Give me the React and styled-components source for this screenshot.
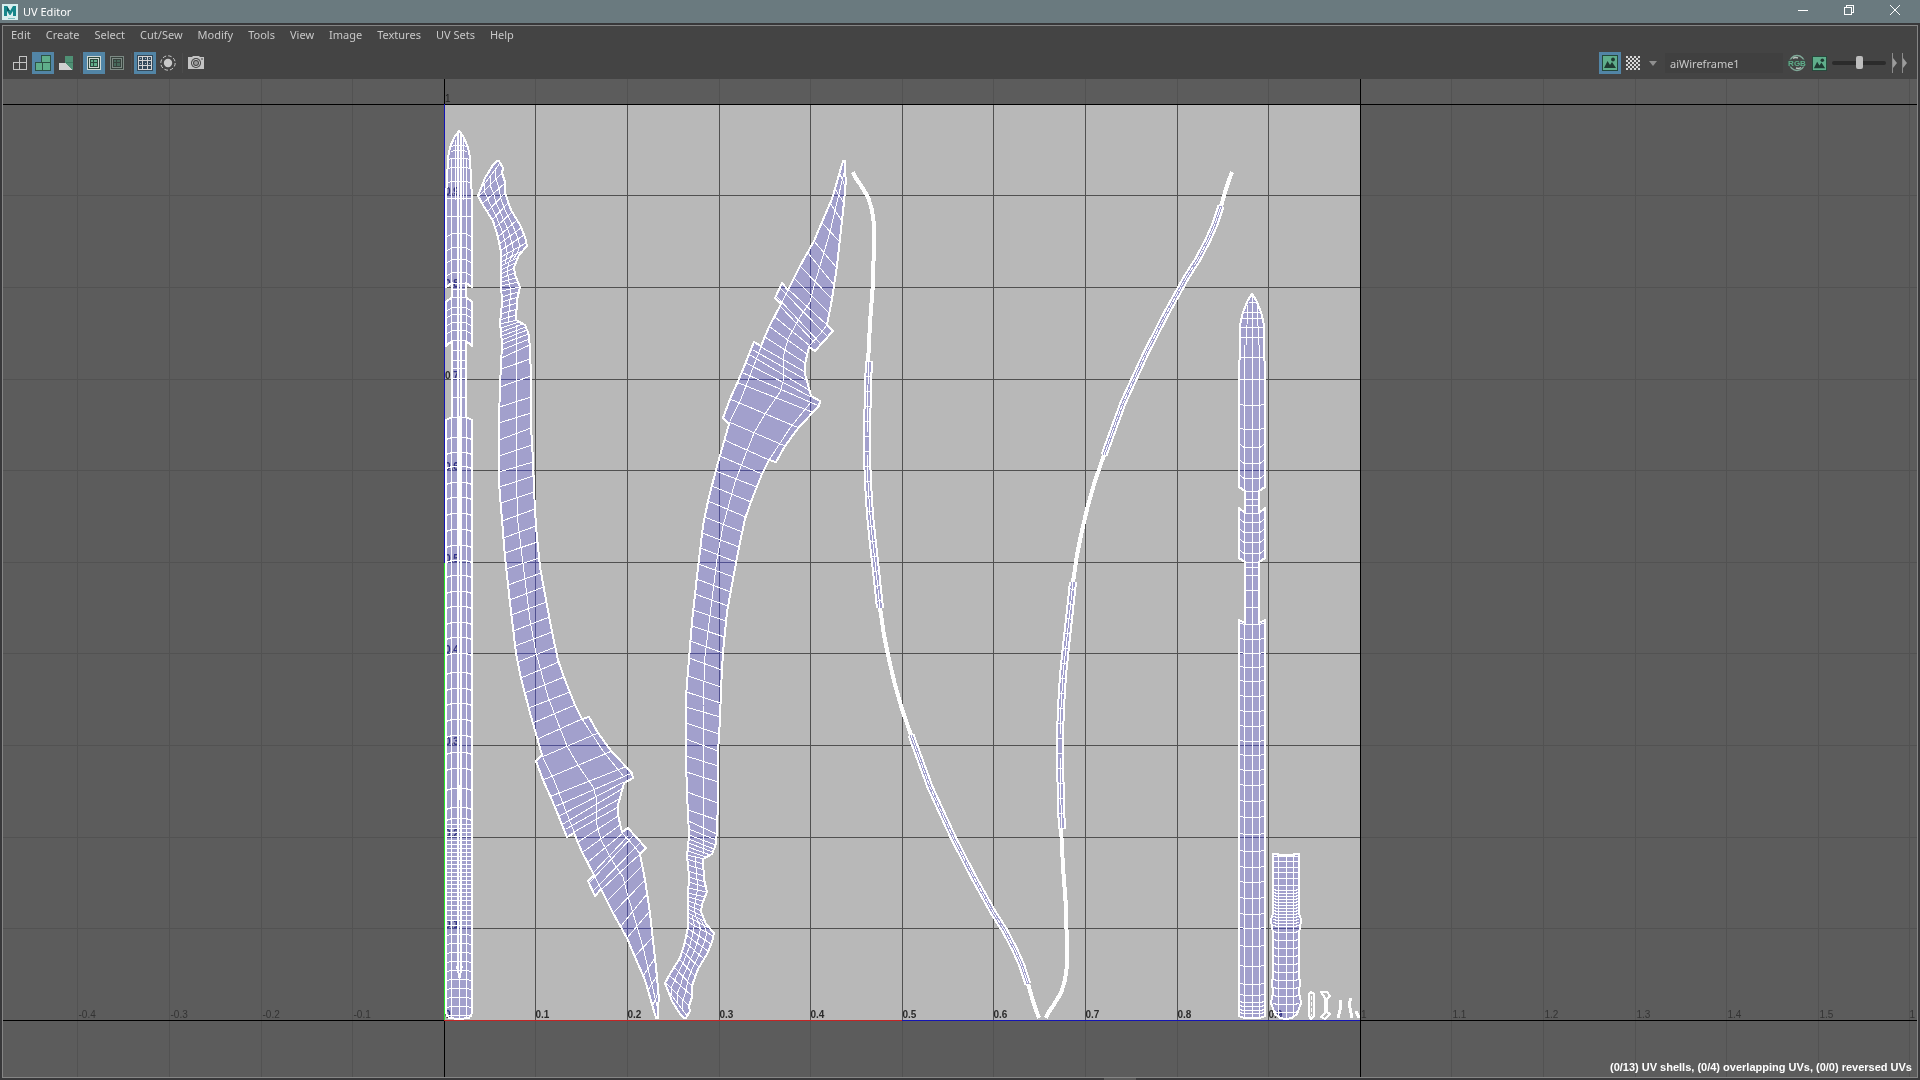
import React from "react";
import styled, { createGlobalStyle } from "styled-components";

const GlobalStyle = createGlobalStyle`
  * { box-sizing: border-box; }
  html, body, #root { height: 100%; }
  body { margin: 0; background: #333; overflow: hidden; }
  button, input { font: inherit; color: inherit; }
`;

const ui = `"Noto Sans", "Open Sans", sans-serif`;

const Window = styled.div`
  display: flex;
  flex-direction: column;
  height: 100vh;
  background: #38383a;
  font-family: ${ui};
`;

const TitleBar = styled.header`
  display: flex;
  align-items: center;
  height: 23px;
  flex: none;
  padding: 0 2px;
  background: #6a7a7f;
  color: #fff;
`;

const Title = styled.h1`
  flex: 1;
  margin: 0 0 0 5px;
  font-size: 11px;
  font-weight: 400;
  line-height: 16px;
`;

const WindowButton = styled.button`
  display: flex;
  align-items: center;
  justify-content: center;
  width: 46px;
  height: 20px;
  margin-bottom: 3px;
  padding: 0;
  border: 0;
  background: none;
`;

const Panel = styled.main`
  display: flex;
  flex-direction: column;
  flex: 1;
  min-height: 0;
  margin: 2px 2px 0;
  border: 1px solid #858585;
  background: #444;
`;

const MenuBar = styled.nav`
  display: flex;
  align-items: center;
  gap: 15px;
  height: 18px;
  padding-left: 8px;
  color: #c8c8c8;
`;

const MenuItem = styled.button`
  padding: 0;
  border: 0;
  background: none;
  font-size: 11px;
  line-height: 14px;
`;

const ToolBar = styled.div`
  display: flex;
  align-items: center;
  height: 35px;
  padding: 3px 8px 0 6px;
`;

const Group = styled.div`
  display: flex;
  align-items: center;
  gap: ${(p) => p.$gap || 0}px;
`;

const Divider = styled.span`
  width: 1px;
  height: 20px;
  margin: 0 2px;
  background: #4c4c4c;
`;

const Spacer = styled.span`
  flex: 1;
`;

const Tool = styled.button`
  display: flex;
  align-items: center;
  justify-content: center;
  width: ${(p) => p.$w || 22}px;
  height: 22px;
  padding: 0;
  border: 0;
  background: ${(p) => (p.$on ? "#5285a6" : "none")};
`;

const TextureField = styled.input`
  width: 118px;
  height: 20px;
  margin: 0 3px 0 4px;
  padding: 0 5px;
  border: 0;
  background: #404040;
  color: #c8c8c8;
  font-size: 11px;
`;

const DimSlider = styled.input`
  appearance: none;
  width: 54px;
  height: 14px;
  margin: 0 3px 0 2px;
  background: none;
  &::-webkit-slider-runnable-track {
    height: 4px;
    border-radius: 2px;
    background: #2b2b2b;
  }
  &::-webkit-slider-thumb {
    appearance: none;
    width: 7px;
    height: 13px;
    margin-top: -5px;
    border-radius: 2px;
    background: #bdbdbd;
  }
`;

const Viewport = styled.section`
  display: flex;
  flex: 1;
  min-height: 0;
  flex-direction: column;
  justify-content: flex-end;
  position: relative;
  background: #5c5c5c;
`;

const Canvas = styled.svg`
  position: absolute;
  inset: 0;
  width: 100%;
  height: 100%;
  font-family: "Liberation Sans", Arial, sans-serif;
  font-size: 10px;
`;

const Status = styled.p`
  position: relative;
  margin: 0;
  padding: 0 5px 3px;
  text-align: right;
  color: #fff;
  font: bold 11px/14px "Liberation Sans", Arial, sans-serif;
`;

const BottomEdge = styled.footer`
  display: flex;
  justify-content: center;
  height: 2px;
  flex: none;
`;

const Grip = styled.span`
  width: 32px;
  margin-left: 320px;
  background: #5a5a5a;
`;

/* ---------- geometry of the UV tile ---------- */
const X0 = 444.3;
const Y0 = 1020.3;
const STEP = 91.6;
const ux = (u) => Math.floor(X0 + u * STEP) + 0.5;
const vy = (v) => Math.floor(Y0 - v * STEP) + 0.5;
const range = (a, b, s = 1) => {
  const out = [];
  for (let i = a; i <= b; i += s) out.push(i);
  return out;
};
const path = (pts) => "M" + pts.map((p) => p.join(" ")).join("L");
const at = (edge, y) => {
  for (let i = 1; i < edge.length; i++) {
    const [xa, ya] = edge[i - 1];
    const [xb, yb] = edge[i];
    if (y >= Math.min(ya, yb) && y <= Math.max(ya, yb) && ya !== yb)
      return xa + ((xb - xa) * (y - ya)) / (yb - ya);
  }
  return edge[edge.length - 1][0];
};

/* ---------- bow limb ---------- */
const bowLeft = [
  [497, 161], [493, 165], [485, 178], [478, 196], [483, 205], [493, 221], [498, 237],
  [501, 253], [501, 283], [502, 303], [500, 323], [502, 343], [501, 367], [500, 383],
  [499, 423], [499, 483], [502, 520], [505, 557], [510, 603], [516, 653], [521, 678],
  [530, 713], [542, 755], [536, 761], [543, 780], [552, 800], [567, 837], [574, 833],
  [582, 852], [594, 875], [588, 881], [595, 896], [601, 889], [613, 913], [627, 938],
  [635, 957], [645, 980], [656, 1018],
];
const bowRight = [
  [499, 161], [503, 168], [502, 173], [505, 182], [505, 193], [511, 210], [520, 225],
  [525, 237], [527, 246], [519, 255], [514, 267], [515, 275], [520, 287], [517, 300],
  [516, 320], [525, 325], [529, 335], [530, 350], [531, 377], [531, 427], [532, 443],
  [533, 460], [534, 490], [536, 527], [540, 567], [546, 600], [552, 632], [558, 660],
  [565, 680], [575, 705], [582, 719], [589, 717], [598, 733], [612, 752], [632, 773],
  [633, 778], [624, 783], [618, 805], [618, 815], [622, 832], [628, 828], [646, 848],
  [640, 854], [645, 880], [650, 913], [653, 940], [657, 977], [659, 1000], [658, 1004], [658, 1018],
];
const gripRungs = [
  [[480, 190], [500, 163]], [[478, 197], [502, 173]], [[482, 204], [505, 183]],
  [[487, 212], [505, 193]], [[492, 220], [508, 203]], [[495, 228], [512, 212]],
  [[498, 237], [517, 220]], [[499, 244], [521, 228]], [[500, 251], [524, 235]],
  [[501, 257], [526, 243]], [[501, 262], [522, 251]], [[501, 266], [517, 258]],
  [[501, 270], [515, 263]], [[501, 274], [514, 268]], [[501, 278], [515, 273]],
  [[501, 282], [516, 278]], [[501, 286], [518, 282]], [[502, 291], [519, 287]],
  [[502, 297], [518, 292]], [[502, 302], [518, 297]], [[501, 308], [517, 303]],
  [[501, 314], [517, 309]], [[500, 320], [516, 315]], [[500, 324], [517, 320]],
];
const bodyRungs = [
  [328, 322], [332, 324], [336, 327], [340, 330], [344, 334], [350, 339], [358, 345], [369, 359],
  [387, 376], [407, 397], [423, 413], [440, 428], [456, 445], [472, 462], [487, 476], [503, 492],
  [521, 509], [538, 526], [553, 542], [569, 558], [585, 573], [600, 587], [615, 602], [631, 617],
  [646, 632], [662, 647], [678, 662], [693, 677], [708, 692], [723, 705], [739, 719],
].map(([l, r]) => [[at(bowLeft, l), l], [at(bowRight, r), r]]);
const bladeRungs = [
  [[542, 757], [598, 733]], [[543, 780], [612, 751]], [[549, 797], [625, 767]],
  [[554, 807], [632, 773]], [[559, 816], [624, 782]], [[563, 824], [622, 789]],
  [[566, 829], [619, 799]], [[574, 832], [618, 807]], [[578, 842], [618, 816]],
  [[583, 852], [620, 825]], [[588, 862], [623, 833]], [[593, 873], [628, 836]],
  [[589, 883], [634, 835]], [[594, 890], [640, 843]], [[602, 889], [640, 854]],
  [[607, 901], [642, 866]], [[613, 913], [644, 881]], [[621, 926], [647, 894]],
  [[627, 938], [649, 912]], [[635, 956], [652, 938]], [[643, 976], [655, 958]],
  [[648, 990], [657, 976]], [[653, 1005], [658, 993]],
];
const bowMid = [
  [516, 325], [516, 440], [516, 473], [518, 523], [525, 580], [530, 620], [536, 653], [548, 697],
  [558, 723], [567, 746], [578, 765], [593, 787], [596, 797], [597, 825], [601, 840], [613, 862],
  [623, 877], [627, 893], [633, 913], [643, 947], [650, 977], [658, 1010],
];
const lerp = ([a, b], t) => [a[0] + (b[0] - a[0]) * t, a[1] + (b[1] - a[1]) * t];
const bowOutline = path([...bowLeft, ...[...bowRight].reverse()]) + "Z";
const bowMesh = [
  ...gripRungs.map(path),
  ...bodyRungs.map(path),
  ...bladeRungs.map(path),
  path(gripRungs.slice(0, 12).map((r) => lerp(r, 0.25))),
  path(gripRungs.map((r) => lerp(r, 0.5))),
  path(gripRungs.slice(0, 12).map((r) => lerp(r, 0.75))),
  path(bowMid),
  path([[543, 758], [554, 780], [574, 832]]),
  path([[582, 719], [603, 751], [624, 777]]),
  path([[622, 833], [634, 846], [640, 854]]),
  path([[594, 875], [601, 889]]),
].join("");

/* ---------- straight columns ---------- */
const mirror = (half, cx) =>
  path([...half, ...[...half].reverse().map(([x, y]) => [2 * cx - x, y])]) + "Z";

const leftColumn = mirror(
  [
    [459, 131], [455, 136], [450, 147], [448, 158], [447, 180], [446, 197], [446, 287], [452, 283],
    [452, 297], [446, 302], [446, 346], [452, 341], [452, 417], [446, 420], [446, 1013], [449, 1018], [458, 1019],
  ],
  459
);
const rightColumn = mirror(
  [
    [1252, 294], [1248, 300], [1243, 312], [1240, 325], [1240, 345], [1239, 375], [1239, 487],
    [1245, 491], [1245, 513], [1239, 508], [1239, 558], [1245, 562], [1245, 623], [1239, 620],
    [1239, 1016], [1244, 1018], [1251, 1018],
  ],
  1252
);
const shortColumn = mirror(
  [
    [1278, 855], [1278, 854], [1273, 854], [1273, 913], [1271, 920], [1272, 928], [1273, 932], [1273, 975],
    [1272, 983], [1273, 992], [1271, 1003], [1275, 1014], [1280, 1018], [1286, 1019],
  ],
  1286
);

const rung = (y, cx, half, inner, d) =>
  `M${cx - half} ${y - d + 0.5}L${cx - inner} ${y + 0.5}H${cx + inner}L${cx + half} ${y - d + 0.5}`;

const leftMesh = [
  ...[145, 150].map((y) => rung(y, 459, 8, 4, -1)),
  ...[158, 167, 181].map((y) => rung(y, 459, 11, 7, -1)),
  ...[198, 216].map((y) => rung(y, 459, 13, 7, 0)),
  ...[233, 247, 259, 272, 283].map((y) => rung(y, 459, 13, 7, -4)),
  ...[289, 297, 350, 360, 368, 378, 397].map((y) => rung(y, 459, 7, 7, 0)),
  ...[307, 314, 322, 330, 340].map((y) => rung(y, 459, 13, 7, -4)),
  ...[417, 437, 452, 466, 482, 497, 513, 529, 545, 560, 575, 591, 606, 622, 637, 653, 672, 688,
    703, 719, 735, 752, 768, 788, 807, 818].map((y) => rung(y, 459, 13, 7, -2)),
  ...range(824, 900, 4).map((y) => rung(y, 459, 13, 7, 0)),
  ...range(905, 925, 5).map((y) => rung(y, 459, 13, 7, 0)),
  ...range(934, 1015, 9).map((y) => rung(y, 459, 13, 7, -1)),
  "M451.5 158V1017M466.5 158V1017M455.5 140V200M463.5 140V200M459.5 975V1018",
].join("");

const rightMesh = [
  "M1249 302.5H1256M1244 312.5H1261M1242 318.5H1262M1241 327.5H1263M1241 337.5H1263",
  ...[357, 379].map((y) => rung(y, 1252, 13, 8, 0)),
  ...[405, 429].map((y) => rung(y, 1252, 13, 8, 2)),
  ...[447, 463, 478].map((y) => rung(y, 1252, 13, 8, 4)),
  ...[522, 532, 542, 553].map((y) => rung(y, 1252, 13, 8, 4)),
  ...[491, 499, 505, 513, 562, 567, 575, 590, 607].map((y) => rung(y, 1252, 7, 7, 0)),
  ...[624, 639, 653, 667, 681, 696, 711, 726, 741, 755, 770, 785, 801, 817, 834, 851, 867, 882,
    898, 914, 928, 946, 966, 984, 995].map((y) => rung(y, 1252, 13, 8, 2)),
  ...[1002, 1006, 1010, 1013].map((y) => rung(y, 1252, 13, 8, 1)),
  "M1252.5 294V1018M1244.5 345V1017M1259.5 345V1017M1247.5 305L1246.5 345M1257.5 305L1258.5 345",
].join("");

const shortMesh = [
  ...[856, 861, 867, 872, 878, 885].map((y) => rung(y, 1286, 13, 8, 0)),
  ...range(890, 928, 3).map((y) => rung(y, 1286, 13, 8, 1)),
  ...range(932, 1012, 8).map((y) => rung(y, 1286, 13, 8, 1)),
  "M1278.5 856V1018M1286.5 856V1018M1293.5 856V1018",
].join("");

/* ---------- bow string ---------- */
const stringThin = [
  [[853, 172], [855, 177], [860, 184], [868, 197], [872, 210], [874, 225], [874, 240], [873, 283], [870, 323], [868, 363]],
  [[880, 608], [884, 635], [888, 655], [895, 685], [902, 709], [911, 735]],
  [[1028, 984], [1033, 1001], [1036, 1010], [1039, 1018]],
].map(path).join("");
const stringWide = path([
  [869, 361], [868, 385], [867, 433], [867, 455], [868, 483], [870, 515], [873, 544], [877, 580], [880, 608],
]);
const stringSlant = path([
  [911, 735], [930, 787], [953, 837], [973, 876], [993, 912], [1005, 931], [1015, 950], [1022, 966], [1028, 984],
]);

const FILL = "#a2a0cc";

function Shells() {
  return (
    <g id="shells" strokeLinejoin="round">
      <g fill="none" stroke="#fff">
        <path d={leftMesh} />
        <path d={rightMesh} />
        <path d={shortMesh} />
        <g strokeWidth="2">
          <path d={leftColumn} />
          <path d={rightColumn} />
          <path d={shortColumn} />
        </g>
      </g>
      <path d="M458 132V970M461 132V970" stroke="#fff" strokeWidth="2" />
      <path d="M459.500 416V545M459.500 785V800" stroke="#fff" strokeWidth="3" />
      <path d="M457 966L459.500 978L462 966" fill="none" stroke="#fff" strokeWidth="2" />
      {["", "matrix(1 0 0 -1 187 1179)"].map((t) => (
        <g key={t} transform={t} fill="none" stroke="#fff">
          <path d={bowMesh} />
          <path d={bowOutline} strokeWidth="2" />
        </g>
      ))}
      {["", "matrix(1 0 0 -1 193 1190)"].map((t) => (
        <g key={t} transform={t} fill="none" stroke="#fff">
          <path d={stringThin} strokeWidth="4" />
          <path d={stringWide} strokeWidth="8" />
          <path d={stringWide} stroke={FILL} strokeWidth="4" />
          <path d={stringWide} strokeWidth="1" />
          <path d={stringWide} strokeWidth="4" strokeDasharray="1 14" />
          <path d={stringSlant} strokeWidth="7" />
          <path d={stringSlant} stroke={FILL} strokeWidth="3" />
          <path d={stringSlant} strokeWidth="1" strokeDasharray="5 1" />
        </g>
      ))}
      <g fill="none" stroke="#fff" strokeWidth="2">
        <path d="M1309 994L1311 992L1314 994V1016L1311 1019L1309 1016Z" />
        <path d="M1321 992H1327L1330 996L1327 999V1012L1330 1014L1325 1019L1321 1017L1325 1013V998Z" />
        <path d="M1341 1000L1340 1010L1338 1018" strokeWidth="3" />
        <path d="M1351 998L1349 1004L1350 1008L1352 1018" strokeWidth="3" />
        <path d="M1356 1011L1359 1018" strokeWidth="3" />
      </g>
      <path d="M1311.500 996V1016" stroke="#fff" strokeDasharray="4 2" />
    </g>
  );
}

function UVCanvas() {
  const inner = range(1, 9);
  const outerX = [...range(-4, -1), ...range(11, 15)];
  return (
    <Canvas viewBox="3 79 1914 998" preserveAspectRatio="xMidYMid slice" shapeRendering="crispEdges" role="img" aria-label="UV layout">
      <path
        stroke="#525252"
        d={range(-4, 16).map((u) => `M${ux(u)} 0V1100`).join("") + range(1, 9).map((v) => `M0 ${vy(v)}H1920`).join("")}
      />
      <rect x="444" y="104" width="916" height="916" fill="#b8b8b8" />
      <g fill={FILL}>
        <path d={leftColumn} />
        <path d={rightColumn} />
        <path d={shortColumn} />
        <path d={bowOutline} />
        <path d={bowOutline} transform="matrix(1 0 0 -1 187 1179)" />
      </g>
      <path
        stroke="#505050"
        d={inner.map((i) => `M${ux(i)} 104V1020M444 ${vy(i)}H1360`).join("")}
      />
      <path stroke="#000" d="M0 104.500H1920M0 1020.500H444M1361 1020.500H1920M444.500 0V104M444.500 1021V1100M1360.500 0V1100" />
      <g fill="#333">
        {outerX.map((u) => (
          <text key={u} x={ux(u) + 1} y="1018">{(u / 10).toFixed(1)}</text>
        ))}
        <text x={ux(16)} y="1018">1</text>
        <text x="1361" y="1018">1</text>
        <text x="445" y="102" fill="#222">1</text>
      </g>
      <g fill="#2a2a2a" fontWeight="bold">
        <text x="445" y="1018">0</text>
        {inner.map((i) => (
          <React.Fragment key={i}>
            <text x={ux(i)} y="1018">{(i / 10).toFixed(1)}</text>
            <text x="445" y={vy(i) - 1}>{(i / 10).toFixed(1)}</text>
          </React.Fragment>
        ))}
      </g>
      <g fill="#303090" style={{ mixBlendMode: "lighten" }}>
        <path d={leftColumn} />
        <path d={rightColumn} />
        <path d={shortColumn} />
        <path d={bowOutline} />
        <path d={bowOutline} transform="matrix(1 0 0 -1 187 1179)" />
      </g>
      <g>
        <rect x="444" y="104" width="1" height="459" fill="#1414b4" />
        <rect x="444" y="563" width="1" height="457" fill="#28e628" />
        <rect x="444" y="1020" width="458" height="1" fill="#c42424" />
        <rect x="902" y="1020" width="458" height="1" fill="#1414b4" />
      </g>
      <Shells />
    </Canvas>
  );
}

/* ---------- icons ---------- */
const GREEN = "#5fae8b";

const Icon = ({ size = 16, children }) => (
  <svg width={size} height={size} viewBox={`0 0 ${size} ${size}`} fill="none" shapeRendering="crispEdges" aria-hidden="true">
    {children}
  </svg>
);

const MayaLogo = () => (
  <svg width="16" height="16" viewBox="0 0 16 16" aria-hidden="true">
    <rect width="16" height="16" fill="#d7eeee" />
    <path d="M2 12V2H5L8 7L11 2H14V12H11V7L8.500 11H7.500L5 7V12Z" fill="#16868a" />
    <path d="M5 2L8 7L5 7Z" fill="#0b5b60" />
    <path d="M6 14.500H13" stroke="#7fc0c2" />
  </svg>
);

const ShellIcon = () => (
  <Icon>
    <path d="M1.500 7.500H7.500V1.500H14.500V14.500H1.500Z" stroke="#c4c4c4" />
    <path d="M7.500 7.500V14.500M7.500 7.500H14.500" stroke="#c4c4c4" />
  </Icon>
);

const ShellFilled = () => (
  <Icon>
    <path d="M.5 7.500H6.500V.5H15.500V15.500H.5Z" fill={GREEN} stroke="#2d5144" />
    <path d="M7.500 8V15M7 7.500H15" stroke="#2d5144" />
  </Icon>
);

const ShellHalf = () => (
  <Icon>
    <path d="M7 1H15V15L7 8Z" fill="#4f9074" />
    <path d="M7.500 7.500H14.500" stroke="#3d7a61" />
    <path d="M1 8H7L14 15H1Z" fill="#d0d0d0" />
  </Icon>
);

const TileIcon = ({ edge, core, gap }) => (
  <Icon>
    <path d="M1.500 1.500H14.500V14.500H1.500Z" stroke={edge} />
    <path d="M2 2H14V14H2Z" fill={gap} />
    <path d="M3.500 3.500H12.500V12.500H3.500Z" stroke={edge} fill={gap} />
    <path d="M5 5H11V11H5Z" fill={core} />
    <path d="M7.500 5V11M5 7.500H11" stroke={gap} />
  </Icon>
);

const GridIcon = () => (
  <Icon>
    <rect width="16" height="16" fill="#34495a" />
    <path d="M1.500 1.500H14.500V14.500H1.500ZM5.500 1V15M10.500 1V15M1 5.500H15M1 10.500H15" stroke="#d4d4d4" />
    <path d="M3.500 3V13M8 3V13M12.500 3V13" stroke="#9eb0bc" strokeDasharray="1 4" />
  </Icon>
);

const IsolateIcon = () => (
  <svg width="16" height="16" viewBox="0 0 16 16" aria-hidden="true">
    <circle cx="8" cy="8" r="4.200" fill="#c8c8c8" />
    <circle cx="8" cy="8" r="7.200" fill="none" stroke="#c8c8c8" strokeDasharray="3.600 2.050" />
  </svg>
);

const CameraIcon = () => (
  <svg width="16" height="14" viewBox="0 0 16 14" aria-hidden="true">
    <path d="M0 1H4L5 0H11L12 1H16V13H0Z" fill="#c4c4c4" />
    <circle cx="8" cy="7" r="5" fill="#444" />
    <circle cx="8" cy="7" r="3.600" fill="none" stroke="#c4c4c4" />
    <circle cx="8" cy="7" r="2" fill="#999" />
    <path d="M13 3H15" stroke="#444" />
  </svg>
);

const PictureIcon = ({ size }) => (
  <svg width={size} height={size} viewBox="0 0 16 16" aria-hidden="true">
    <rect x=".5" y=".5" width="15" height="15" fill={GREEN} stroke="#24483b" />
    <path d="M2 13L5.500 6L8 10L10 7L14 13Z" fill="#1f3a32" />
    <circle cx="11" cy="4.500" r="1.900" fill="#1f3a32" />
  </svg>
);

const CheckerIcon = () => (
  <Icon size={14}>
    <rect width="14" height="14" fill="#d6d6d6" />
    {range(0, 48).map((i) => {
      const x = i % 7;
      const y = Math.floor(i / 7);
      return (x + y) % 2 ? <rect key={i} x={x * 2} y={y * 2} width="2" height="2" fill="#4a4a4a" /> : null;
    })}
  </Icon>
);

const RgbIcon = () => (
  <svg width="20" height="18" viewBox="0 0 20 18" aria-hidden="true">
    <circle cx="10" cy="9" r="7.500" fill="none" stroke="#7fa897" strokeWidth="1.500" />
    <path d="M6 4.500Q8 3 11 4M14 13.500Q12 15 9 14" fill="none" stroke="#b8c4be" strokeWidth="1.500" />
    <rect x="0" y="5.500" width="20" height="7" fill="#3f4744" />
    <text x="10" y="12" textAnchor="middle" fontFamily="Liberation Sans, sans-serif" fontWeight="bold" fontSize="8" fill={GREEN}>RGB</text>
  </svg>
);

const Arrow = () => (
  <svg width="5" height="20" viewBox="0 0 5 20" aria-hidden="true">
    <path d="M.5 0V20" stroke="#8c8c8c" />
    <path d="M1 5L5 10L1 15Z" fill="#9c9c9c" />
  </svg>
);

const menus = ["Edit", "Create", "Select", "Cut/Sew", "Modify", "Tools", "View", "Image", "Textures", "UV Sets", "Help"];

export default function App() {
  return (
    <Window>
      <GlobalStyle />
      <TitleBar>
        <MayaLogo />
        <Title>UV Editor</Title>
        <WindowButton aria-label="Minimize">
          <Icon size={12}><path d="M1 6.500H11" stroke="#fff" /></Icon>
        </WindowButton>
        <WindowButton aria-label="Restore">
          <Icon size={12}><path d="M1.500 3.500H8.500V10.500H1.500ZM3.500 3V1.500H10.500V8.500H9" stroke="#fff" /></Icon>
        </WindowButton>
        <WindowButton aria-label="Close">
          <svg width="12" height="12" viewBox="0 0 12 12" aria-hidden="true"><path d="M1 1L11 11M11 1L1 11" stroke="#fff" /></svg>
        </WindowButton>
      </TitleBar>
      <Panel>
        <MenuBar>
          {menus.map((m) => <MenuItem key={m}>{m}</MenuItem>)}
        </MenuBar>
        <ToolBar>
          <Group $gap={1}>
            <Tool aria-label="Wireframe"><ShellIcon /></Tool>
            <Tool $on aria-label="Shaded"><ShellFilled /></Tool>
          </Group>
          <Tool $w={24} aria-label="Distortion"><ShellHalf /></Tool>
          <Divider />
          <Group>
            <Tool $on aria-label="Texture borders"><TileIcon edge="#cfd8d4" core={GREEN} gap="#2d4a40" /></Tool>
            <Tool $w={24} aria-label="Shell borders"><TileIcon edge="#7d8a84" core="#45685a" gap="#37423d" /></Tool>
          </Group>
          <Divider />
          <Group>
            <Tool $on aria-label="Grid"><GridIcon /></Tool>
            <Tool $w={24} aria-label="Isolate select"><IsolateIcon /></Tool>
          </Group>
          <Divider />
          <Tool aria-label="UV snapshot"><CameraIcon /></Tool>
          <Spacer />
          <Group>
            <Tool $on aria-label="Display image"><PictureIcon size={16} /></Tool>
            <Tool $w={24} aria-label="Checker map"><CheckerIcon /></Tool>
            <Tool $w={16} aria-label="Texture list">
              <svg width="8" height="5" viewBox="0 0 8 5" aria-hidden="true"><path d="M0 0H8L4 5Z" fill="#909090" /></svg>
            </Tool>
            <TextureField aria-label="Texture" defaultValue="aiWireframe1" />
            <Tool aria-label="RGB channels"><RgbIcon /></Tool>
            <Tool aria-label="Dim image"><PictureIcon size={15} /></Tool>
            <DimSlider type="range" aria-label="Image dimming" min="0" max="100" defaultValue="50" />
            <Tool $w={10} aria-label="Exposure"><Arrow /></Tool>
            <Tool $w={10} aria-label="Gamma"><Arrow /></Tool>
          </Group>
        </ToolBar>
        <Viewport>
          <UVCanvas />
          <Status>(0/13) UV shells, (0/4) overlapping UVs, (0/0) reversed UVs</Status>
        </Viewport>
      </Panel>
      <BottomEdge><Grip /></BottomEdge>
    </Window>
  );
}
